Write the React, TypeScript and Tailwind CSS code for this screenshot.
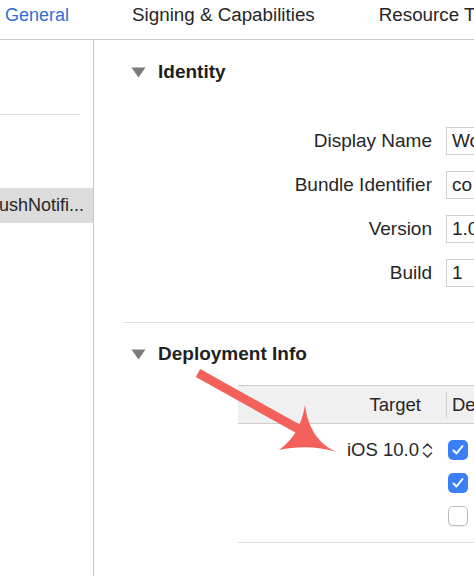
import React from "react";

const font = { fontFamily: '"Liberation Sans", Arial, sans-serif' };

function Disclosure() {
  return (
    <svg width="15" height="11" viewBox="0 0 15 11" className="shrink-0">
      <path d="M0.5 0.5 H14.5 L7.5 10.5 Z" fill="#7b7b7b" />
    </svg>
  );
}

function Stepper() {
  return (
    <svg width="11" height="17" viewBox="0 0 11 17" className="ml-[3px] shrink-0">
      <path d="M1.5 6 L5.5 2 L9.5 6" fill="none" stroke="#3a3a3a" strokeWidth="1.6" strokeLinecap="round" strokeLinejoin="round" />
      <path d="M1.5 11 L5.5 15 L9.5 11" fill="none" stroke="#3a3a3a" strokeWidth="1.6" strokeLinecap="round" strokeLinejoin="round" />
    </svg>
  );
}

function Checkbox({ checked }: { checked: boolean }) {
  if (!checked) {
    return <div className="w-[20px] h-[20px] rounded-[5px] border border-[#bdbdbd] bg-white shadow-[0_1px_1px_rgba(0,0,0,0.08)]" />;
  }
  return (
    <div className="w-[20px] h-[20px] rounded-[5px] bg-[#3a7ff6] flex items-center justify-center">
      <svg width="14" height="14" viewBox="0 0 14 14">
        <path d="M2.5 7.5 L5.5 10.5 L11.5 3" fill="none" stroke="white" strokeWidth="2" strokeLinecap="round" strokeLinejoin="round" />
      </svg>
    </div>
  );
}

const fields = [
  { label: "Display Name", value: "Wo" },
  { label: "Bundle Identifier", value: "co" },
  { label: "Version", value: "1.0" },
  { label: "Build", value: "1" },
];

export default function App() {
  return (
    <div className="relative w-[474px] h-[576px] overflow-hidden bg-white text-[#262626] flex flex-col" style={font}>
      {/* Tabs */}
      <div className="h-10 shrink-0 border-b border-[#c9c9c9] flex items-center pl-[5px] text-[18px] whitespace-nowrap pb-[9px]">
        <span className="shrink-0 text-[#2c6fd8]">General</span>
        <span className="shrink-0 ml-[63px] text-[18.8px]">Signing &amp; Capabilities</span>
        <span className="shrink-0 ml-[64px] text-[18.8px]">Resource Tags</span>
      </div>

      <div className="flex flex-1 min-h-0">
        {/* Sidebar */}
        <div className="w-[94px] shrink-0 border-r border-[#c8c8c8] overflow-hidden">
          <div className="mt-[74px] h-px w-[80px] bg-[#dcdcdc]" />
          <div className="mt-[73px] h-[35px] bg-[#dcdcdc] flex items-center text-[18px] whitespace-nowrap">
            <span className="-ml-[1px]">ushNotifi...</span>
          </div>
        </div>

        {/* Main */}
        <div className="flex-1 min-w-0 overflow-hidden">
          <div className="mt-[22px] h-5 pl-[37px] flex items-center gap-[12px]">
            <Disclosure />
            <span className="text-[19px] font-bold text-[#1f1f1f]">Identity</span>
          </div>

          <div className="mt-[45px] grid grid-cols-[338px_120px] gap-x-[14px] gap-y-4">
            {fields.map((f) => (
              <React.Fragment key={f.label}>
                <div className="h-[28px] flex items-center justify-end text-[19px] whitespace-nowrap">{f.label}</div>
                <div className="h-[28px] border border-[#cfcfcf] flex items-center pl-[5px] text-[19px]">{f.value}</div>
              </React.Fragment>
            ))}
          </div>

          <div className="mt-[35px] ml-[29px] h-px bg-[#dedede]" />

          <div className="mt-[21px] h-5 pl-[37px] flex items-center gap-[12px]">
            <Disclosure />
            <span className="text-[19px] font-bold text-[#1f1f1f] whitespace-nowrap">Deployment Info</span>
          </div>

          <div className="mt-[21px] ml-[144px] w-[300px]">
            <div className="h-[39px] border-y border-[#cdcdcd] bg-[#f0f0f0] flex items-center text-[18.5px]">
              <div className="w-[208px] shrink-0 text-right pr-[25px]">Target</div>
              <div className="h-[26px] w-px shrink-0 bg-[#cdcdcd]" />
              <div className="pl-[5px] whitespace-nowrap">Devices</div>
            </div>
            <div className="flex pt-[16px]">
              <div className="w-[208px] shrink-0 pr-[13px] h-[20px] flex items-center justify-end text-[18.5px]">
                <span>iOS 10.0</span>
                <Stepper />
              </div>
              <div className="pl-[2px] flex flex-col gap-[13px]">
                <Checkbox checked />
                <Checkbox checked />
                <Checkbox checked={false} />
              </div>
            </div>
            <div className="mt-[16px] h-px bg-[#dcdcdc]" />
          </div>
        </div>
      </div>

      {/* Annotation arrow */}
      <svg className="absolute inset-0 pointer-events-none" width="474" height="576" viewBox="0 0 474 576">
        <line x1="198" y1="373" x2="302" y2="431" stroke="#f4605a" strokeWidth="9" />
        <path
          d="M305 405 C308 428 318 444 337 452 C318 446 297 446 279 450 C293 440 302 425 305 405 Z"
          fill="#f4605a"
        />
      </svg>
    </div>
  );
}
